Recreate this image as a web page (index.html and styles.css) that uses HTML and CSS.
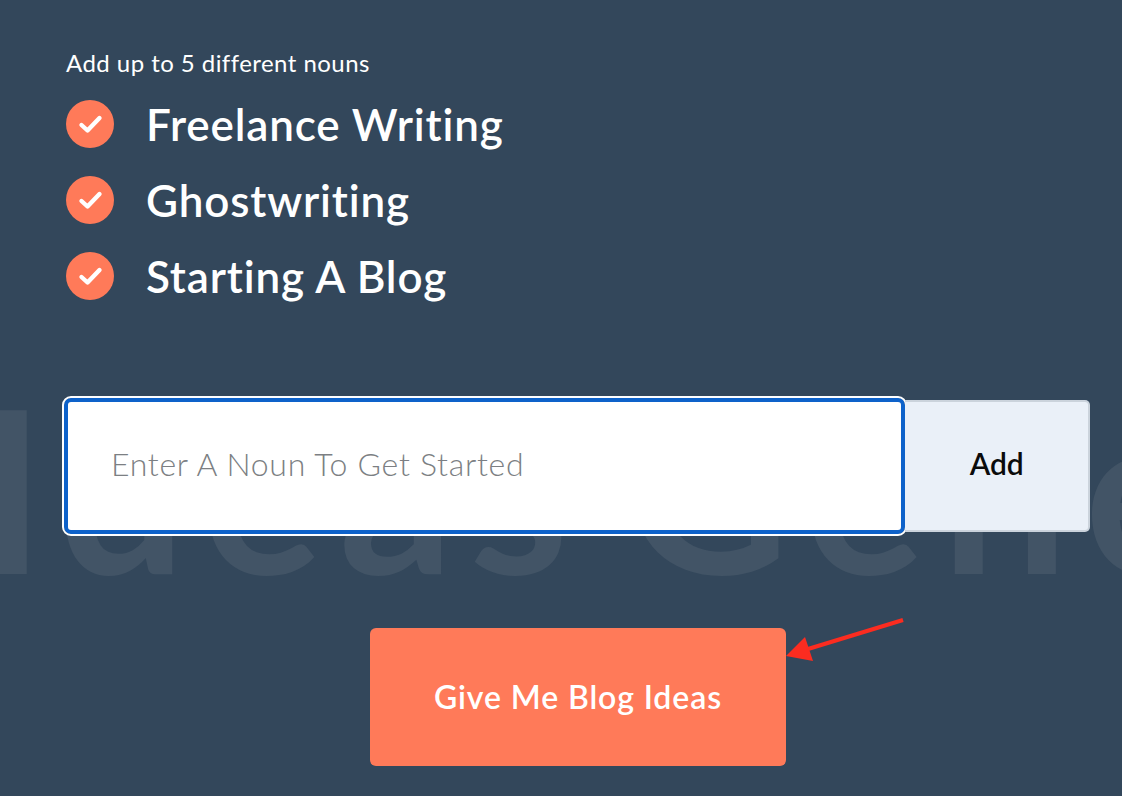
FILE: index.html
```html
<!DOCTYPE html>
<html lang="en">
<head>
<meta charset="utf-8">
<title>Blog Ideas Generator</title>
<link rel="stylesheet" href="styles.css">
</head>
<body>
<main class="page">
  <div class="watermark" aria-hidden="true">Ideas Generator</div>
  <p class="hint">Add up to 5 different nouns</p>
  <ul class="nouns">
    <li class="noun">
      <svg class="check" viewBox="0 0 48 48"><circle cx="24" cy="24" r="24" fill="#ff7a59"/><path d="M15.5 25l6 5.5 12-12.5" fill="none" stroke="#fff" stroke-width="4.4" stroke-linecap="round" stroke-linejoin="round"/></svg>
      <span>Freelance Writing</span>
    </li>
    <li class="noun">
      <svg class="check" viewBox="0 0 48 48"><circle cx="24" cy="24" r="24" fill="#ff7a59"/><path d="M15.5 25l6 5.5 12-12.5" fill="none" stroke="#fff" stroke-width="4.4" stroke-linecap="round" stroke-linejoin="round"/></svg>
      <span>Ghostwriting</span>
    </li>
    <li class="noun">
      <svg class="check" viewBox="0 0 48 48"><circle cx="24" cy="24" r="24" fill="#ff7a59"/><path d="M15.5 25l6 5.5 12-12.5" fill="none" stroke="#fff" stroke-width="4.4" stroke-linecap="round" stroke-linejoin="round"/></svg>
      <span>Starting A Blog</span>
    </li>
  </ul>
  <form class="add-row">
    <div class="field"><span class="placeholder">Enter A Noun To Get Started</span></div>
    <div class="add">Add</div>
  </form>
  <div class="submit-row">
    <div class="submit">Give Me Blog Ideas</div>
  </div>
  <svg class="arrow" viewBox="0 0 130 50"><path d="M117 3L22 32" stroke="#fb2c20" stroke-width="4" fill="none"/><path d="M0 39L19 20L27 44Z" fill="#fb2c20"/></svg>
</main>
</body>
</html>
```
FILE: styles.css
```css
* { box-sizing: border-box; }
html, body { margin: 0; height: 100%; }
body { background: #33475b; overflow: hidden; font-family: Lato, "Open Sans", sans-serif; }
.page { position: relative; width: 1122px; height: 796px; padding: 49px 32px 0 62px; overflow: hidden; }
.watermark {
  position: absolute; left: -22px; top: 337px;
  font-size: 226px; line-height: 300px; font-weight: 700; color: #425466; white-space: nowrap; letter-spacing: 16px; word-spacing: -30px;
}
.hint { position: relative; margin: 0 0 0 4px; font-size: 24px; line-height: 28px; color: #fff; letter-spacing: .45px; }
.nouns { position: relative; list-style: none; margin: 23px 0 0 4px; padding: 0; display: flex; flex-direction: column; gap: 28px; }
.noun { display: flex; align-items: center; gap: 32px; height: 48px; font-size: 44px; font-weight: 600; color: #fff; letter-spacing: .85px; }
.check { width: 48px; height: 48px; flex: none; }
.add-row { position: relative; display: flex; align-items: center; margin: 98px 0 0; }
.field {
  width: 843px; height: 136px; background: #fff; border: 4px solid #0e62ca; border-radius: 7px;
  outline: 2px solid #fff; outline-offset: 0; margin-left: 2px; display: flex; align-items: center; padding: 0 0 6px 43px;
}
.placeholder { font-size: 32px; font-weight: 300; color: #7c7f83; letter-spacing: .7px; }
.add {
  width: 185px; height: 132px; background: #eaf0f8; border: 2px solid #cbd3dc; border-left: 0; border-radius: 0 5px 5px 0;
  display: flex; align-items: center; justify-content: center; padding-bottom: 6px; font-size: 30px; font-weight: 600; color: #0b0b0b;
}
.submit-row { position: relative; display: flex; justify-content: flex-start; margin: 94px 0 0 308px; }
.submit {
  width: 416px; height: 138px; background: #ff7a59; border-radius: 6px; display: flex; align-items: center; justify-content: center;
  padding-bottom: 2px; font-size: 32px; font-weight: 600; color: #fff; letter-spacing: .9px;
}
.arrow { position: absolute; left: 786px; top: 617px; width: 130px; height: 50px; }
```
